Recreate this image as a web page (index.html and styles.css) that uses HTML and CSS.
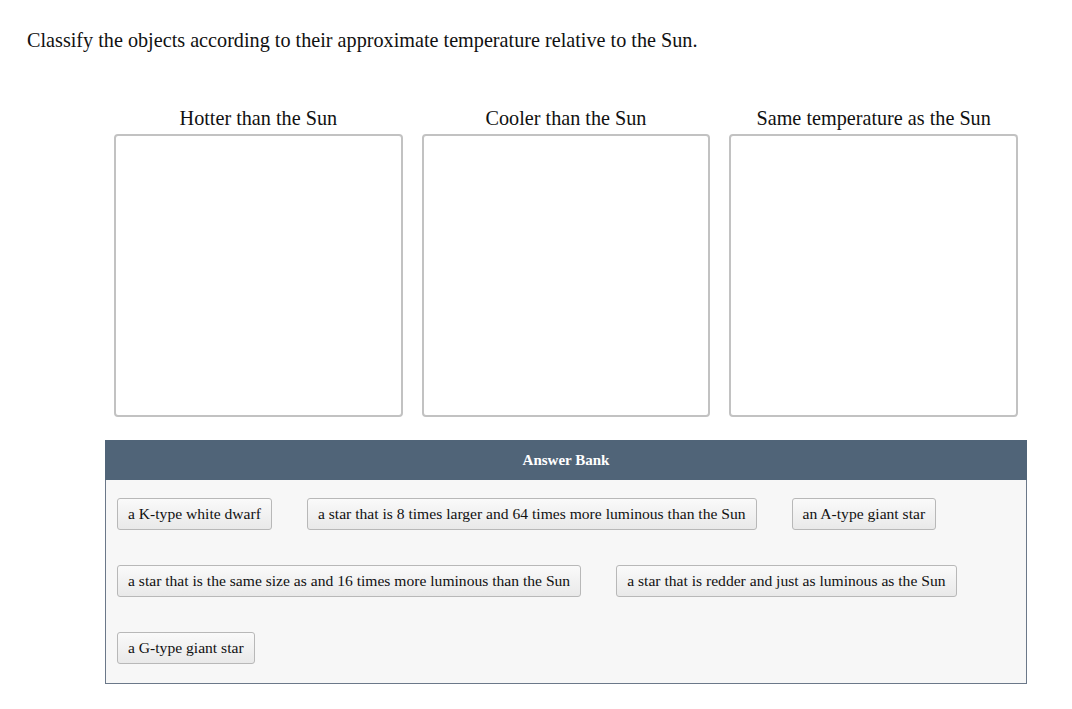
FILE: index.html
```html
<!DOCTYPE html>
<html>
<head>
  <title>Classify</title>
  <link rel="stylesheet" href="styles.css">
</head>
<body>

  <div class="question">
    <p class="prompt">Classify the objects according to their approximate temperature relative to the Sun.</p>

    <div class="bins">
      <div class="bin">
        <div class="bin-title">Hotter than the Sun</div>
        <div class="bin-drop"></div>
      </div>
      <div class="bin">
        <div class="bin-title">Cooler than the Sun</div>
        <div class="bin-drop"></div>
      </div>
      <div class="bin">
        <div class="bin-title">Same temperature as the Sun</div>
        <div class="bin-drop"></div>
      </div>
    </div>

    <div class="answer-bank">
      <div class="answer-bank-title">Answer Bank</div>
      <div class="answer-bank-items">
        <div class="chip">a K-type white dwarf</div>
        <div class="chip">a star that is 8 times larger and 64 times more luminous than the Sun</div>
        <div class="chip">an A-type giant star</div>
        <div class="chip">a star that is the same size as and 16 times more luminous than the Sun</div>
        <div class="chip">a star that is redder and just as luminous as the Sun</div>
        <div class="chip">a G-type giant star</div>
      </div>
    </div>
  </div>

</body>
</html>
```

FILE: styles.css
```css
body {
  margin: 0;
  padding: 0;
  background: #fff;
  color: #111;
  font-family: "Liberation Serif", "Times New Roman", serif;
}
.question {
  padding: 28px 0 0 27px;
}
.prompt {
  margin: 0;
  font-size: 20.2px;
  line-height: 24px;
}
.bins {
  display: grid;
  grid-template-columns: repeat(3, 1fr);
  column-gap: 19px;
  width: 904px;
  margin: 55px 0 0 87px;
}
.bin-title {
  text-align: center;
  font-size: 20.2px;
  line-height: 22px;
  margin-bottom: 5px;
}
.bin-drop {
  height: 279px;
  border: 2px solid #c2c2c2;
  border-radius: 4px;
  background: #fff;
}
.answer-bank {
  width: 922px;
  margin: 23px 0 0 78px;
}
.answer-bank-title {
  background: #506478;
  color: #fff;
  font-weight: bold;
  font-size: 15px;
  text-align: center;
  height: 40px;
  line-height: 40px;
}
.answer-bank-items {
  display: flex;
  flex-wrap: wrap;
  gap: 35px;
  padding: 18px 11px 19px;
  background: #f7f7f7;
  border: 1px solid #6b7889;
  border-top: none;
}
.chip {
  height: 30px;
  line-height: 30px;
  padding: 0 10px;
  font-size: 15.6px;
  color: #111;
  border: 1px solid #b8b8b8;
  border-radius: 3px;
  background: linear-gradient(#fafafa, #e9e9e9);
  white-space: nowrap;
}
```
